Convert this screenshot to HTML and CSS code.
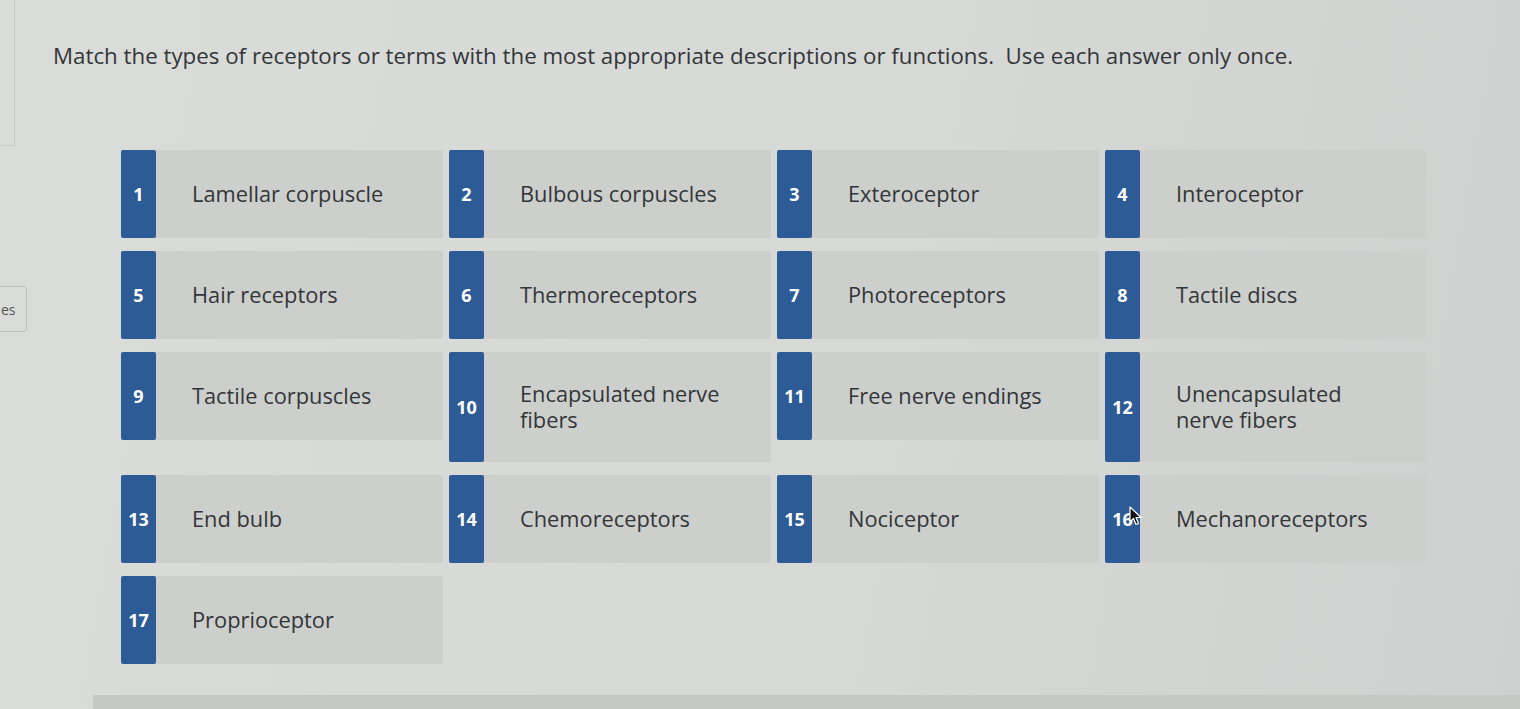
FILE: index.html
```html
<!DOCTYPE html>
<html lang="en">
<head>
    <meta charset="UTF-8">
    <meta name="viewport" content="width=device-width, initial-scale=1.0">
    <title>Matching</title>
    <link rel="stylesheet" href="styles.css">
</head>
<body>
    <div class="page">
        <aside class="rail">
            <div class="rail-panel"></div>
            <div class="rail-tab"><span>es</span></div>
        </aside>

        <main class="question">
            <p class="prompt">Match the types of receptors or terms with the most appropriate descriptions or functions.&nbsp; Use each answer only once.</p>

            <div class="choices">
                <div class="choice"><span class="num">1</span><span class="label">Lamellar corpuscle</span></div>
                <div class="choice"><span class="num">2</span><span class="label">Bulbous corpuscles</span></div>
                <div class="choice"><span class="num">3</span><span class="label">Exteroceptor</span></div>
                <div class="choice"><span class="num">4</span><span class="label">Interoceptor</span></div>

                <div class="choice"><span class="num">5</span><span class="label">Hair receptors</span></div>
                <div class="choice"><span class="num">6</span><span class="label">Thermoreceptors</span></div>
                <div class="choice"><span class="num">7</span><span class="label">Photoreceptors</span></div>
                <div class="choice"><span class="num">8</span><span class="label">Tactile discs</span></div>

                <div class="choice"><span class="num">9</span><span class="label">Tactile corpuscles</span></div>
                <div class="choice tall"><span class="num">10</span><span class="label">Encapsulated nerve fibers</span></div>
                <div class="choice"><span class="num">11</span><span class="label">Free nerve endings</span></div>
                <div class="choice tall"><span class="num">12</span><span class="label">Unencapsulated nerve fibers</span></div>

                <div class="choice"><span class="num">13</span><span class="label">End bulb</span></div>
                <div class="choice"><span class="num">14</span><span class="label">Chemoreceptors</span></div>
                <div class="choice"><span class="num">15</span><span class="label">Nociceptor</span></div>
                <div class="choice">
                    <span class="num">16
                        <svg class="pointer" width="13" height="20" viewBox="0 0 13 20">
                            <path d="M1 1 L1 16 L4.5 12.5 L7 18.5 L9.5 17.5 L7 11.5 L12 11.5 Z" fill="#111" stroke="#fff" stroke-width="1.2" stroke-linejoin="round"/>
                        </svg>
                    </span>
                    <span class="label">Mechanoreceptors</span>
                </div>

                <div class="choice"><span class="num">17</span><span class="label">Proprioceptor</span></div>
            </div>
        </main>
    </div>
    <div class="footer-bar"></div>
</body>
</html>
```

FILE: styles.css
```css
html, body {
    margin: 0;
    height: 100%;
}

body {
    font-family: "Open Sans", Lato, Arial, sans-serif;
    color: #333638;
    background: linear-gradient(100deg, #dadcda 0%, #d7d9d7 55%, #cfd1d0 100%);
    display: flex;
    flex-direction: column;
    overflow: hidden;
}

.page {
    display: flex;
    flex: 1;
}

/* left navigation rail, mostly scrolled off */
.rail {
    width: 27px;
    flex-shrink: 0;
}

.rail-panel {
    width: 14px;
    height: 145px;
    border-right: 1px solid #c3c5c3;
    border-bottom: 1px solid #c9cbc9;
}

.rail-tab {
    margin-top: 140px;
    height: 44px;
    width: 26px;
    border: 1px solid #bfc1bf;
    border-left: none;
    border-radius: 0 4px 4px 0;
    display: flex;
    align-items: center;
    font-size: 14px;
    color: #555;
}

.rail-tab span {
    padding-left: 1px;
}

.question {
    flex: 1;
}

.prompt {
    margin: 42px 0 0 26px;
    font-size: 22.3px;
    line-height: 28px;
}

.choices {
    margin: 80px 0 0 94px;
    display: grid;
    grid-template-columns: repeat(4, 322px);
    column-gap: 6px;
    row-gap: 13px;
    align-items: start;
}

.choice {
    display: flex;
    height: 88px;
    background: #cdcfcd;
    border-radius: 2px;
}

.choice.tall {
    height: 110px;
}

.num {
    position: relative;
    width: 35px;
    flex-shrink: 0;
    background: #2d5b95;
    color: #fff;
    font-weight: 700;
    font-size: 18px;
    border-radius: 2px;
    display: flex;
    align-items: center;
    justify-content: center;
}

.label {
    align-self: center;
    padding: 0 38px 0 36px;
    font-size: 21.8px;
    line-height: 26px;
}

.pointer {
    position: absolute;
    left: 24px;
    top: 31px;
}

.footer-bar {
    height: 14px;
    margin-left: 93px;
    background: #c6c8c6;
}
```
